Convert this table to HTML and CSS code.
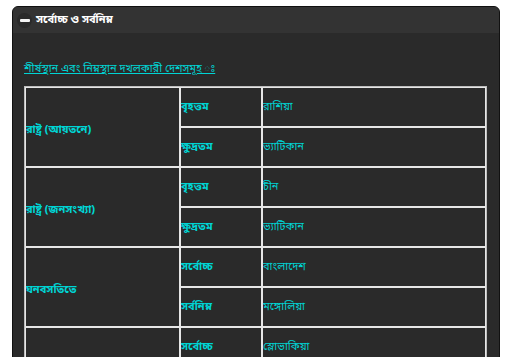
FILE: index.html
```html
<!DOCTYPE html>
<html lang="bn">
<head>
<meta charset="utf-8">
<link rel="stylesheet" href="styles.css">
</head>
<body>
<div class="panel">
  <div class="panel-head">
    <span class="toggle"><span class="bar"></span></span>
    <span class="title">সর্বোচ্চ ও সর্বনিম্ন</span>
  </div>
  <div class="panel-body">
    <p class="lead"><a href="#">শীর্ষস্থান এবং নিম্নস্থান দখলকারী দেশসমূহ ঃ</a></p>
    <table class="stats">
      <colgroup><col class="c1"><col class="c2"><col class="c3"></colgroup>
      <tr><th class="group" rowspan="2">রাষ্ট্র (আয়তনে)</th><th>বৃহত্তম</th><td>রাশিয়া</td></tr>
      <tr><th>ক্ষুদ্রতম</th><td>ভ্যাটিকান</td></tr>
      <tr><th class="group" rowspan="2">রাষ্ট্র (জনসংখ্যা)</th><th>বৃহত্তম</th><td>চীন</td></tr>
      <tr><th>ক্ষুদ্রতম</th><td>ভ্যাটিকান</td></tr>
      <tr><th class="group" rowspan="2">ঘনবসতিতে</th><th>সর্বোচ্চ</th><td>বাংলাদেশ</td></tr>
      <tr><th>সর্বনিম্ন</th><td>মঙ্গোলিয়া</td></tr>
      <tr><th class="group" rowspan="2">&nbsp;</th><th>সর্বোচ্চ</th><td>স্লোভাকিয়া</td></tr>
      <tr><th>সর্বনিম্ন</th><td>&nbsp;</td></tr>
    </table>
  </div>
</div>
</body>
</html>
```

FILE: styles.css
```css
html, body {
  background: #ffffff;
}
body {
  margin: 6px 12px 0 12px;
  font-family: "Noto Sans Bengali", "Lohit Bengali", "Noto Sans", "DejaVu Sans", sans-serif;
  font-size: 11px;
}
.panel {
  border: 1px solid #111;
  border-radius: 6px 6px 0 0;
  background: #2a2a2a;
  overflow: hidden;
}
.panel-head {
  height: 26px;
  background: #333333;
  display: flex;
  align-items: center;
  padding-left: 4px;
  gap: 4px;
}
.toggle {
  width: 15px;
  height: 15px;
  border-radius: 50%;
  background: #2a2a2a;
  display: flex;
  align-items: center;
  justify-content: center;
}
.bar {
  width: 10px;
  height: 3px;
  background: #f4f4f4;
  border-radius: 1px;
}
.title {
  color: #ffffff;
  font-weight: bold;
  font-size: 11px;
}
.panel-body {
  padding: 0 11px 20px 11px;
}
.lead {
  margin: 0;
  padding-top: 29px;
  height: 24px;
  line-height: 14px;
}
.lead a {
  color: #00d4d4;
  font-weight: normal;
  text-decoration: underline;
}
.stats {
  width: 463px;
  border: 1px solid #bdbdbd;
  border-spacing: 0;
  table-layout: fixed;
}
.c1 { width: 155px; }
.c2 { width: 82px; }
.stats th, .stats td {
  border: 1px solid #e6e6e6;
  height: 38px;
  padding: 0;
  text-align: left;
  vertical-align: middle;
  color: #00d4d4;
  font-size: 11px;
}
.stats th {
  font-weight: bold;
}
.stats th.group {
  padding-top: 5px;
  height: 33px;
}
.stats td {
  font-weight: normal;
}
```
